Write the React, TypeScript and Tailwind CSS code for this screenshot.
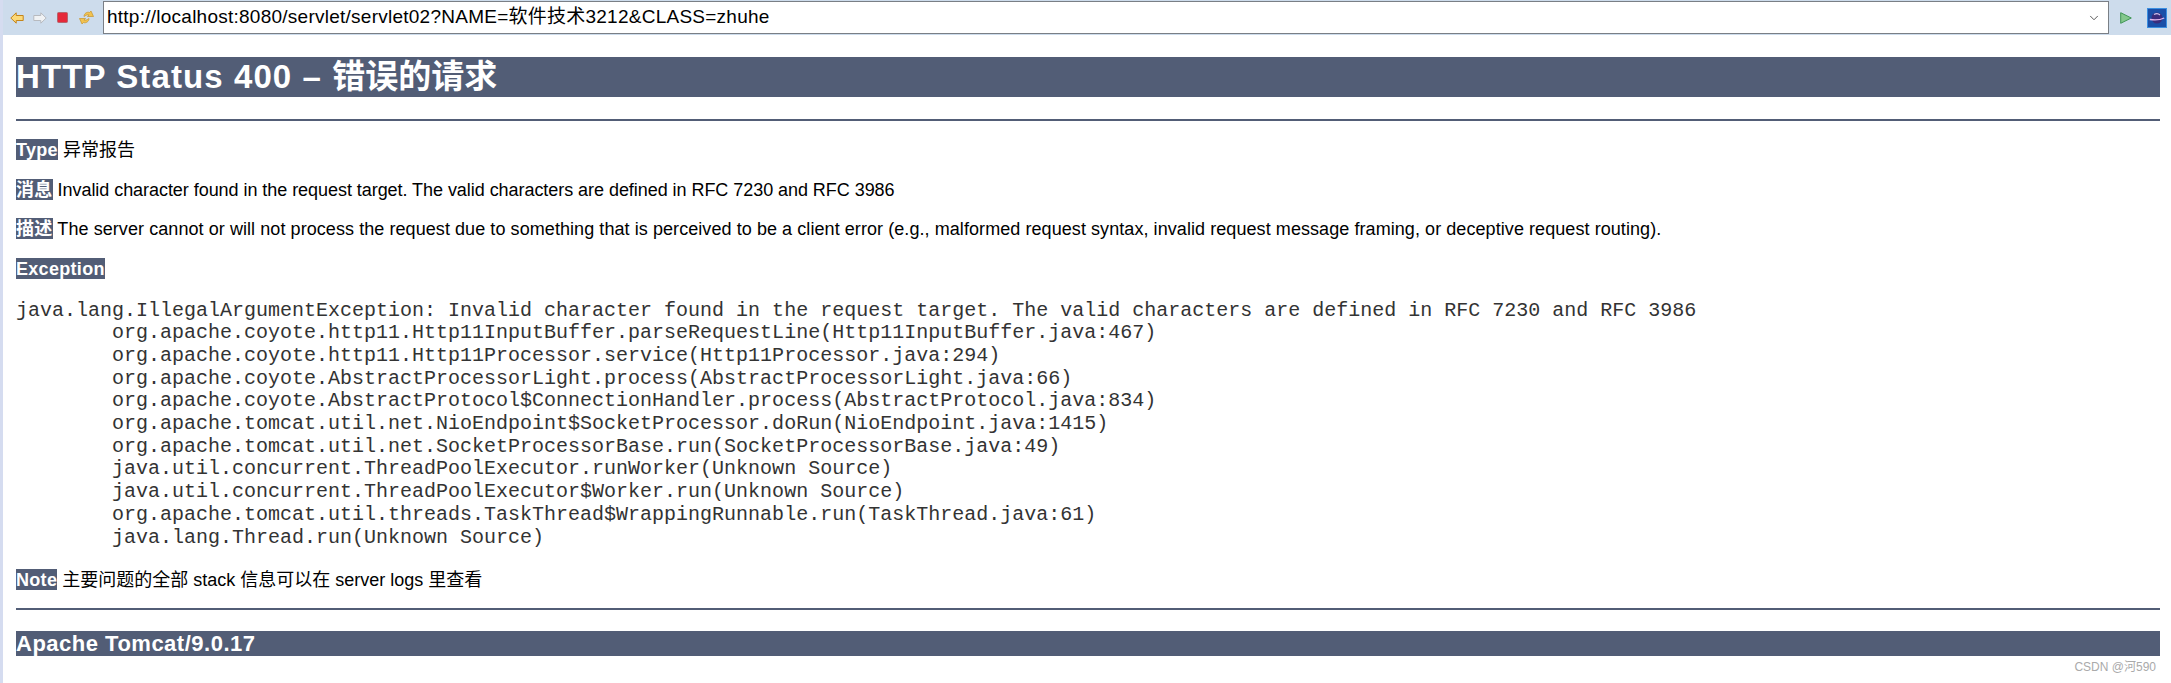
import { ChevronDown } from 'lucide-react'

const stack = `java.lang.IllegalArgumentException: Invalid character found in the request target. The valid characters are defined in RFC 7230 and RFC 3986
\torg.apache.coyote.http11.Http11InputBuffer.parseRequestLine(Http11InputBuffer.java:467)
\torg.apache.coyote.http11.Http11Processor.service(Http11Processor.java:294)
\torg.apache.coyote.AbstractProcessorLight.process(AbstractProcessorLight.java:66)
\torg.apache.coyote.AbstractProtocol$ConnectionHandler.process(AbstractProtocol.java:834)
\torg.apache.tomcat.util.net.NioEndpoint$SocketProcessor.doRun(NioEndpoint.java:1415)
\torg.apache.tomcat.util.net.SocketProcessorBase.run(SocketProcessorBase.java:49)
\tjava.util.concurrent.ThreadPoolExecutor.runWorker(Unknown Source)
\tjava.util.concurrent.ThreadPoolExecutor$Worker.run(Unknown Source)
\torg.apache.tomcat.util.threads.TaskThread$WrappingRunnable.run(TaskThread.java:61)
\tjava.lang.Thread.run(Unknown Source)`

function Toolbar() {
  return (
    <div className="flex items-center h-[35px] bg-[#cddcec]">
      <svg className="ml-[7px] shrink-0" width="14" height="12" viewBox="0 0 14 12">
        <path d="M.8 6 6.2.8v2.7h7v5h-7v2.7z" fill="#fcd978" stroke="#c4851a" />
      </svg>
      <svg className="ml-[9px] shrink-0" width="14" height="12" viewBox="0 0 14 12">
        <path d="M13.2 6 7.8.8v2.7h-7v5h7v2.7z" fill="#f0f2f4" stroke="#b7babf" />
      </svg>
      <svg className="ml-[10px] shrink-0" width="11" height="11" viewBox="0 0 11 11">
        <rect x=".5" y=".5" width="10" height="10" rx="1" fill="#e5293a" stroke="#b5666e" />
      </svg>
      <svg className="ml-[11px] shrink-0" width="15" height="15" viewBox="0 0 15 15">
        <path d="M5 6.5C5 3.5 8 1.5 10.5 2.5L12 1l2.5 5.5-6 0 1.5-1.7C8 4.5 6.5 5.5 5 6.5z" fill="#f2c350" stroke="#c7932b" strokeWidth=".7" />
        <path d="M10 8.5c0 3-3 5-5.5 4L3 14 .5 8.5l6 0L5 10.2c2 .3 3.5-.7 5-1.7z" fill="#f2c350" stroke="#c7932b" strokeWidth=".7" />
      </svg>
      <div className="ml-[9px] flex items-center justify-between w-[2006px] h-[33px] shrink-0 bg-white border border-[#7a7f86] pl-[3px] pr-[7px] text-[19px] tracking-[0.25px] text-black">
        <span>http://localhost:8080/servlet/servlet02?NAME=软件技术3212&amp;CLASS=zhuhe</span>
        <ChevronDown className="w-[14px] h-[14px] text-[#444]" strokeWidth={1.5} />
      </div>
      <svg className="ml-[11px] shrink-0" width="12" height="12" viewBox="0 0 12 12">
        <path d="M.7.7 11.3 6 .7 11.3z" fill="#83c78c" stroke="#3f9654" />
      </svg>
      <div className="ml-[15px] w-[20px] h-[20px] shrink-0 flex items-center justify-center bg-[#1a4fa8] border border-[#3b8fe0]">
        <svg width="16" height="16" viewBox="0 0 16 16">
          <circle cx="8" cy="8" r="5.5" fill="#3a2c7c" />
          <path d="M5 4.6c2-1.2 4.5-1 6 .4" stroke="#cfc6ee" strokeWidth="1.2" fill="none" />
          <path d="M.8 9.5c4 .6 10.5.4 14.4-1.5" stroke="#e3b8ee" strokeWidth="1.3" fill="none" />
        </svg>
      </div>
    </div>
  )
}

function Label({ children }: { children: React.ReactNode }) {
  return <b className="inline-block h-[21px] leading-[23px] tracking-[0.3px] bg-[#525d76] text-white font-bold">{children}</b>
}

export default function App() {
  return (
    <div className="relative h-[683px] overflow-hidden bg-white border-l-[3px] border-[#d5dcf0] text-[18px] text-black font-['Liberation_Sans','Noto_Sans_CJK_SC',sans-serif]">
      <Toolbar />
      <div className="pl-[13px] pr-[11px]">
        <h1 className="mt-[22px] h-[40px] bg-[#525d76] text-white font-bold text-[33px] leading-[40px]">
          <span className="tracking-[1.1px]">HTTP Status 400 – </span>错误的请求
        </h1>
        <hr className="mt-[22px] h-[2px] border-0 bg-[#525d76]" />
        <p className="mt-[18px] h-[21px] leading-[23px]"><Label>Type</Label> 异常报告</p>
        <p className="mt-[18.5px] h-[21px] leading-[23px] tracking-[-0.05px]"><Label>消息</Label> Invalid character found in the request target. The valid characters are defined in RFC 7230 and RFC 3986</p>
        <p className="mt-[18.5px] h-[21px] leading-[23px] tracking-[0.07px]"><Label>描述</Label> The server cannot or will not process the request due to something that is perceived to be a client error (e.g., malformed request syntax, invalid request message framing, or deceptive request routing).</p>
        <p className="mt-[18.5px] h-[21px] leading-[23px]"><Label>Exception</Label></p>
        <pre className="mt-[21px] font-['Liberation_Mono',monospace] text-[20px] leading-[22.7px] text-[#333] [tab-size:8]">{stack}</pre>
        <p className="mt-[20px] h-[21px] leading-[23px]"><Label>Note</Label> 主要问题的全部 stack 信息可以在 server logs 里查看</p>
        <hr className="mt-[18px] h-[2px] border-0 bg-[#525d76]" />
        <h3 className="mt-[21px] h-[25px] bg-[#525d76] text-white font-bold text-[22px] tracking-[0.5px] leading-[25px]">Apache Tomcat/9.0.17</h3>
      </div>
      <div className="absolute right-[15px] bottom-[7px] text-[12px] text-[#aaa]">CSDN @河590</div>
    </div>
  )
}
